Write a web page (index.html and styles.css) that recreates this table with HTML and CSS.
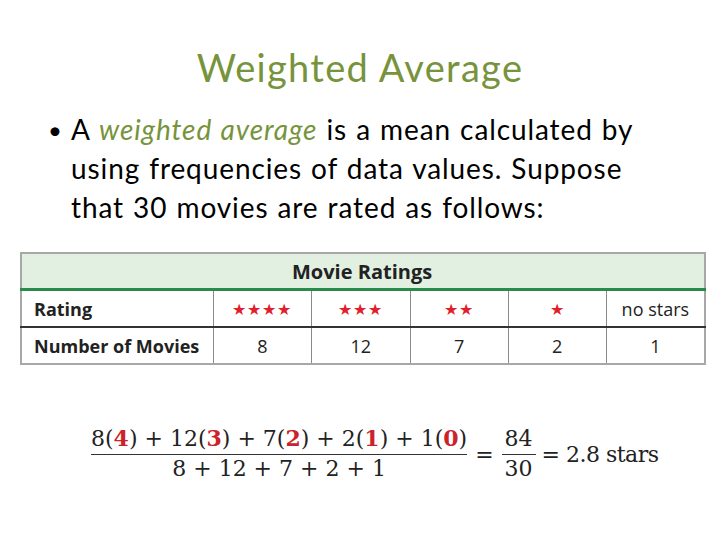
FILE: index.html
```html
<!DOCTYPE html>
<html>
<head>
<meta charset="utf-8">
<link rel="stylesheet" href="styles.css">
</head>
<body>
<div class="slide">
  <h1 class="title">Weighted Average</h1>
  <ul class="bullets">
    <li>A <em>weighted average</em> is a mean calculated by<br>using frequencies of data values. Suppose<br>that 30 movies are rated as follows:</li>
  </ul>
  <table class="ratings">
    <tr class="head"><th colspan="6">Movie Ratings</th></tr>
    <tr class="r1">
      <td class="lab">Rating</td>
      <td class="star">★★★★</td>
      <td class="star">★★★</td>
      <td class="star">★★</td>
      <td class="star">★</td>
      <td>no stars</td>
    </tr>
    <tr class="r2">
      <td class="lab">Number of Movies</td>
      <td>8</td><td>12</td><td>7</td><td>2</td><td>1</td>
    </tr>
  </table>
  <div class="eq">
    <div class="frac big">
      <div class="num">8(<b>4</b>) + 12(<b>3</b>) + 7(<b>2</b>) + 2(<b>1</b>) + 1(<b>0</b>)</div>
      <div class="den">8 + 12 + 7 + 2 + 1</div>
    </div>
    <span class="op">=</span>
    <div class="frac">
      <div class="num">84</div>
      <div class="den">30</div>
    </div>
    <span class="op">= 2.8 stars</span>
  </div>
</div>
</body>
</html>
```
FILE: styles.css
```css
html, body { margin: 0; padding: 0; background: #fff; }
.slide { width: 720px; height: 540px; position: relative; font-family: "Lato", sans-serif; color: #000; }
.title { margin: 0; padding-top: 44px; text-align: center; font-weight: 400; font-size: 38px; line-height: 46px; letter-spacing: 1.3px; color: #77933c; font-family: "Lato", sans-serif; }
.bullets { margin: 20px 0 0 0; padding: 0 0 0 71px; list-style: none; }
.bullets li { position: relative; font-size: 28px; line-height: 39px; letter-spacing: 0.9px; word-spacing: 1px; white-space: nowrap; }
.bullets li::before { content: "•"; position: absolute; left: -23px; font-size: 24px; }
.bullets em { color: #77933c; font-style: italic; }
.ratings { margin: 25px 0 0 20px; width: 686px; border-collapse: collapse; border: 2px solid #a8a8a8; font-family: "Open Sans", sans-serif; font-size: 18px; }
.ratings th { height: 34px; background: #e2f0e2; border-bottom: 3px solid #2a8a4a; font-weight: 700; font-size: 20px; text-align: left; padding: 0 0 0 270px; color: #222; }
.ratings td { text-align: center; border-left: 1.5px solid #8a8a8a; height: 35px; padding: 0; color: #222; width: 98px; }
.ratings td.lab { text-align: left; font-weight: 700; padding-left: 12px; width: 180px; border-left: none; }
.ratings tr.r1 td { border-bottom: 2.5px solid #333; }
.ratings td.star { color: #e0202a; font-size: 16px; letter-spacing: 1px; }
.eq { display: flex; align-items: center; margin: 60px 0 0 91px; font-family: "DejaVu Serif", "Liberation Serif", serif; font-size: 22px; color: #222; }
.frac { display: flex; flex-direction: column; align-items: center; }
.frac .num { padding: 0 3px 2px; border-bottom: 1.5px solid #333; line-height: 26px; }
.frac .den { line-height: 28px; }
.frac.big .num { padding: 0 0 2px; }
.frac b { color: #cc2229; font-weight: 700; }
.op { margin: 0 8px; }
.op:last-child { margin-left: 6px; letter-spacing: -0.5px; }
```
